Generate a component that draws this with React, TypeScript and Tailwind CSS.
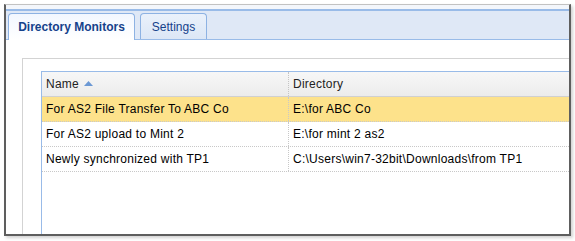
import React from "react";

const rows = [
  { name: "For AS2 File Transfer To ABC Co", dir: "E:\\for ABC Co", selected: true },
  { name: "For AS2 upload to Mint 2", dir: "E:\\for mint 2 as2", selected: false },
  { name: "Newly synchronized with TP1", dir: "C:\\Users\\win7-32bit\\Downloads\\from TP1", selected: false },
];

function SortUp() {
  return (
    <svg width="9" height="5" viewBox="0 0 9 5" className="ml-[5px] mt-[-2px]">
      <path d="M0 5 L4.5 0 L9 5 Z" fill="#6b98d4" />
    </svg>
  );
}

export default function App() {
  return (
    <div className="h-[241px] w-[575px] bg-white pl-1 pt-1 font-['Liberation_Sans',Arial,sans-serif] text-[12px]">
      <div className="flex h-[232px] w-[567px] flex-col overflow-hidden border-x-2 border-b-2 border-t border-x-[#5e5e5e] border-b-[#5e5e5e] border-t-[#c2c2c2] bg-white shadow-[2px_2px_3px_rgba(0,0,0,0.18)]">
        <div className="h-[4px] shrink-0 bg-[#f3f6fb]" />

        {/* tab strip */}
        <div className="flex h-[31px] shrink-0 items-end gap-[5px] border-b border-t-2 border-[#99bbe8] bg-[#dfe8f6] pl-[2px]">
          <div className="-mb-px flex h-[27px] w-[127px] items-center justify-center rounded-t-[4px] border-x border-t border-[#8db2e3] bg-gradient-to-b from-[#f2f7ff] to-white font-bold text-[#15428b]">
            Directory Monitors
          </div>
          <div className="flex h-[26px] w-[67px] items-center justify-center rounded-t-[4px] border-x border-t border-[#8db2e3] bg-gradient-to-b from-[#eaf1fb] to-[#dce7f6] text-[#15428b]">
            Settings
          </div>
        </div>

        {/* body */}
        <div className="flex flex-1 flex-col pl-4 pt-[18px]">
          <div className="flex flex-1 flex-col border-l border-t border-[#d3d3d3] pl-[18px] pt-3">
            <div className="flex-1 border-l border-t border-[#99bbe8] tracking-[0.25px] text-black">
              {/* header */}
              <div className="flex h-[25px] border-b border-[#d0d0d0] bg-gradient-to-b from-[#f7f7f7] to-[#ececec] text-[#222]">
                <div className="flex w-[247px] shrink-0 items-center border-r border-dotted border-[#c5c5c5] pl-1">
                  Name
                  <SortUp />
                </div>
                <div className="flex w-[300px] shrink-0 items-center pl-1">Directory</div>
              </div>
              {rows.map((r) => (
                <div
                  key={r.name}
                  className={`flex h-[25px] border-b border-dotted border-[#c8c8c8] ${r.selected ? "bg-[#fde28b]" : "bg-white"}`}
                >
                  <div className="flex w-[247px] shrink-0 items-center border-r border-dotted border-[#c8c8c8] pl-1">
                    {r.name}
                  </div>
                  <div className="flex w-[300px] shrink-0 items-center whitespace-nowrap pl-1">{r.dir}</div>
                </div>
              ))}
            </div>
          </div>
        </div>
      </div>
    </div>
  );
}
